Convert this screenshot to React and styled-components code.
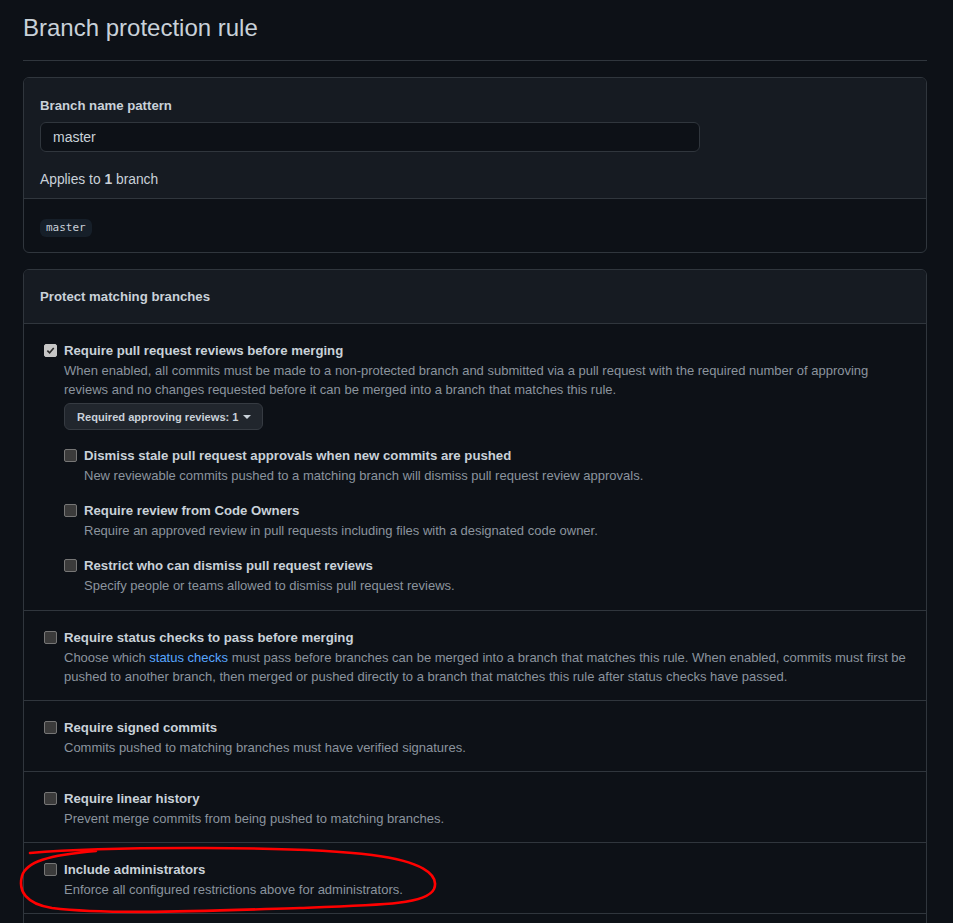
import React from 'react'
import styled, { createGlobalStyle } from 'styled-components'

const GlobalStyle = createGlobalStyle`
    html, body {
        margin: 0;
        padding: 0;
        background: #0d1117;
    }

    body {
        font-family: 'Liberation Sans', Arial, sans-serif;
        color: #c9d1d9;
    }
`

const Page = styled('div')`
    position: relative;
    width: 904px;
    padding: 0 0 40px 23px;
`

const Subhead = styled('div')`
    display: flex;
    align-items: center;
    padding: 10px 0 14px;
    border-bottom: 1px solid #30363d;
    margin-bottom: 16px;

    h1 {
        margin: 0;
        font-size: 24px;
        line-height: 36px;
        font-weight: 400;
        color: #c9d1d9;
    }
`

const Box = styled('div')`
    border: 1px solid #30363d;
    border-radius: 6px;
    background: #0d1117;
    margin-bottom: 16px;
    overflow: hidden;
`

const BoxHeader = styled('div')`
    background: #161b22;
    padding: ${p => p.$pad || '16px 16px 16px'};
    border-bottom: 1px solid #30363d;
    font-size: 13.2px;
    line-height: 21px;
    font-weight: 700;
`

const Label = styled('label')`
    display: block;
    font-weight: 700;
    font-size: 13.2px;
    line-height: 21px;
    margin-bottom: 6px;
`

const Input = styled('div')`
    width: 660px;
    height: 30px;
    box-sizing: border-box;
    border: 1px solid #30363d;
    border-radius: 6px;
    background: #0d1117;
    padding: 0 12px;
    font-size: 14px;
    font-weight: 400;
    line-height: 28px;
    color: #c9d1d9;
`

const Applies = styled('p')`
    margin: 17px 0 0;
    font-size: 13.8px;
    line-height: 21px;
    font-weight: 400;

    strong {
        font-weight: 700;
    }
`

const BranchList = styled('div')`
    display: flex;
    align-items: center;
    padding: 20px 16px 15px;
`

const Code = styled('code')`
    display: inline-block;
    font-family: 'DejaVu Sans Mono', 'Liberation Mono', monospace;
    font-size: 11px;
    line-height: 18px;
    padding: 0 6px;
    border-radius: 6px;
    background: #161f29;
    color: #c9d1d9;
`

const Row = styled('div')`
    padding: 16px 16px ${p => p.$bottom || 14}px 20px;
    border-bottom: 1px solid #30363d;
`

const Check = styled('div')`
    display: flex;
    align-items: flex-start;
    margin-top: ${p => p.$gap || 0}px;
`

const BoxCol = styled('div')`
    flex: 0 0 20px;
    height: 21px;
    display: flex;
    align-items: center;
`

const Checkbox = styled('span')`
    display: flex;
    align-items: center;
    justify-content: center;
    width: 13px;
    height: 13px;
    box-sizing: border-box;
    border-radius: 2px;
    border: 1px solid ${p => p.$checked ? '#c6c6c6' : '#767676'};
    background: ${p => p.$checked ? '#c6c6c6' : '#3b3b3b'};
`

const Body = styled('div')`
    flex: 1;
    min-width: 0;
`

const Title = styled('div')`
    font-weight: 700;
    font-size: 13.2px;
    line-height: 21px;
    color: #c9d1d9;
`

const Note = styled('div')`
    font-size: 13px;
    line-height: 19px;
    color: #8b949e;

    a {
        color: #58a6ff;
        text-decoration: none;
    }
`

const Dropdown = styled('button')`
    display: inline-flex;
    align-items: center;
    gap: 4px;
    margin-top: 4px;
    height: 27px;
    width: 199px;
    box-sizing: border-box;
    padding: 0 12px;
    background: #21262d;
    border: 1px solid #363b42;
    border-radius: 6px;
    font-family: inherit;
    font-size: 11.1px;
    font-weight: 700;
    white-space: nowrap;
    color: #c9d1d9;
`

const Caret = styled('span')`
    display: inline-block;
    width: 0;
    height: 0;
    border-left: 4px solid transparent;
    border-right: 4px solid transparent;
    border-top: 4px solid #c9d1d9;
`

const Nested = styled('div')`
    margin-top: 15px;
`

const Annotation = styled('svg')`
    position: absolute;
    left: 0;
    top: 0;
    width: 953px;
    height: 923px;
    pointer-events: none;
`

const Tick = () => (
    <svg width="9" height="9" viewBox="0 0 10 10">
        <path d="M1.5 5.2 L4 7.6 L8.6 2.2" fill="none" stroke="#2b2b2b" strokeWidth="1.8" />
    </svg>
)

const Option = ({ checked, title, children, gap }) => (
    <Check $gap={gap}>
        <BoxCol>
            <Checkbox $checked={checked}>{checked && <Tick />}</Checkbox>
        </BoxCol>
        <Body>
            <Title>{title}</Title>
            <Note>{children}</Note>
        </Body>
    </Check>
)

const App = () => {
    return (
        <Page>
            <GlobalStyle />
            <Subhead>
                <h1>Branch protection rule</h1>
            </Subhead>

            <Box>
                <BoxHeader $pad="17px 16px 8px">
                    <Label>Branch name pattern</Label>
                    <Input>master</Input>
                    <Applies>Applies to <strong>1</strong> branch</Applies>
                </BoxHeader>
                <BranchList>
                    <Code>master</Code>
                </BranchList>
            </Box>

            <Box>
                <BoxHeader>Protect matching branches</BoxHeader>
                <Row $bottom={15}>
                    <Check>
                        <BoxCol>
                            <Checkbox $checked><Tick /></Checkbox>
                        </BoxCol>
                        <Body>
                            <Title>Require pull request reviews before merging</Title>
                            <Note>
                                When enabled, all commits must be made to a non-protected branch and submitted via a pull request with the required number of approving reviews and no changes requested before it can be merged into a branch that matches this rule.
                            </Note>
                            <Dropdown>Required approving reviews: 1 <Caret /></Dropdown>
                            <Nested>
                                <Option title="Dismiss stale pull request approvals when new commits are pushed">
                                    New reviewable commits pushed to a matching branch will dismiss pull request review approvals.
                                </Option>
                                <Option gap={15} title="Require review from Code Owners">
                                    Require an approved review in pull requests including files with a designated code owner.
                                </Option>
                                <Option gap={15} title="Restrict who can dismiss pull request reviews">
                                    Specify people or teams allowed to dismiss pull request reviews.
                                </Option>
                            </Nested>
                        </Body>
                    </Check>
                </Row>
                <Row>
                    <Option title="Require status checks to pass before merging">
                        Choose which <a href="#">status checks</a> must pass before branches can be merged into a branch that matches this rule. When enabled, commits must first be pushed to another branch, then merged or pushed directly to a branch that matches this rule after status checks have passed.
                    </Option>
                </Row>
                <Row>
                    <Option title="Require signed commits">
                        Commits pushed to matching branches must have verified signatures.
                    </Option>
                </Row>
                <Row>
                    <Option title="Require linear history">
                        Prevent merge commits from being pushed to matching branches.
                    </Option>
                </Row>
                <Row>
                    <Option title="Include administrators">
                        Enforce all configured restrictions above for administrators.
                    </Option>
                </Row>
                <Row>
                    <Option title="Allow force pushes">
                        Permit force pushes for all users with push access.
                    </Option>
                </Row>
            </Box>

            <Annotation viewBox="0 0 953 923">
                <path
                    d="M30 853 C 110 846, 300 846, 372 855 C 420 861, 440 874, 434 889 C 427 904, 385 905, 300 908 C 200 911, 110 915, 52 908 C 26 904, 18 891, 22 876 C 26 862, 48 855, 96 851"
                    fill="none"
                    stroke="#ff0000"
                    strokeWidth="2.6"
                    strokeLinecap="round"
                />
            </Annotation>
        </Page>
    )
}

export default App
